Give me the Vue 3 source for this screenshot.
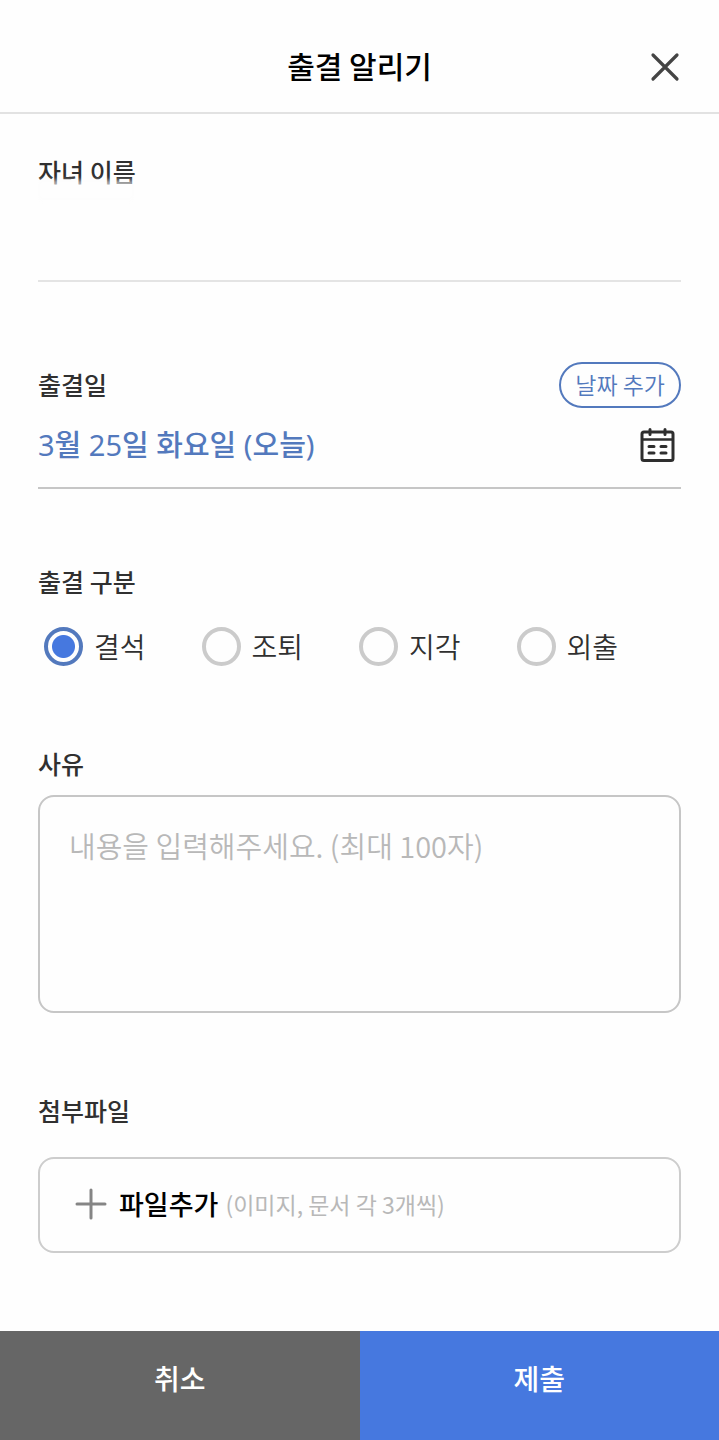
<script setup>
import { ref } from 'vue'

const childName = ref('')
const reason = ref('')
const kind = ref('absent')
const kinds = [
  { value: 'absent', label: '결석' },
  { value: 'early', label: '조퇴' },
  { value: 'late', label: '지각' },
  { value: 'outing', label: '외출' },
]
</script>

<template>
  <div class="page">
    <header class="header">
      <h1 class="title">출결 알리기</h1>
      <button class="close" type="button" aria-label="닫기">
        <svg width="30" height="30" viewBox="0 0 30 30" aria-hidden="true">
          <path d="M3 3 27 27M27 3 3 27" fill="none" stroke="#444" stroke-width="3.2" stroke-linecap="round" />
        </svg>
      </button>
    </header>

    <form id="attendance" class="form" @submit.prevent>
      <section class="name-section">
        <label class="label" for="child">자녀 이름</label>
        <input id="child" v-model="childName" class="name-input" type="text" />
      </section>

      <section class="date-section">
        <div class="date-head">
          <span class="label">출결일</span>
          <button class="add-date" type="button">날짜 추가</button>
        </div>
        <button class="date-row" type="button">
          <span>3월 25일 화요일 (오늘)</span>
          <svg width="36" height="36" viewBox="0 0 36 36" aria-hidden="true">
            <g fill="none" stroke="#2e2e2e" stroke-linecap="round" stroke-linejoin="round">
              <rect x="2" y="5" width="31" height="28.5" rx="2" stroke-width="3" />
              <path d="M3 12.5H32" stroke-width="2.6" />
              <path d="M10 2.5V7.5M25 2.5V7.5" stroke-width="3" />
              <path d="M9 19.5H14M21 19.5H26M9 26H14M21 26H26" stroke-width="3" />
            </g>
          </svg>
        </button>
      </section>

      <fieldset class="kind-section">
        <legend class="label">출결 구분</legend>
        <div class="kinds">
          <label v-for="k in kinds" :key="k.value" class="kind">
            <input v-model="kind" class="radio" type="radio" name="kind" :value="k.value" />
            <span>{{ k.label }}</span>
          </label>
        </div>
      </fieldset>

      <section class="reason-section">
        <label class="label" for="reason">사유</label>
        <textarea id="reason" v-model="reason" class="reason" maxlength="100" placeholder="내용을 입력해주세요. (최대 100자)"></textarea>
      </section>

      <section class="file-section">
        <span class="label">첨부파일</span>
        <button class="file" type="button">
          <svg width="32" height="32" viewBox="0 0 32 32" aria-hidden="true">
            <path d="M16 2V30M2 16H30" fill="none" stroke="#858585" stroke-width="3" stroke-linecap="round" />
          </svg>
          <span class="file-text">파일추가</span>
          <span class="file-hint">(이미지, 문서 각 3개씩)</span>
        </button>
      </section>
    </form>

    <footer class="footer">
      <button class="action cancel" type="button">취소</button>
      <button class="action submit" type="submit" form="attendance">제출</button>
    </footer>
  </div>
</template>

<style>
body {
  margin: 0;
  background: #fefefe;
}
</style>

<style scoped>
.page {
  display: flex;
  flex-direction: column;
  min-height: 100vh;
  color: #303030;
  font-family: "Noto Sans CJK KR", sans-serif;
}

.page * {
  box-sizing: border-box;
}

button,
input,
textarea {
  margin: 0;
  padding: 0;
  border: 0;
  background: none;
  color: inherit;
  font: inherit;
}

svg {
  display: block;
  flex: none;
}

.header {
  display: grid;
  grid-template-columns: 1fr auto 1fr;
  align-items: center;
  padding: 22px 39px 0;
  height: 114px;
  border-bottom: 2px solid #e2e2e2;
}

.title {
  grid-column: 2;
  margin: 0;
  padding-bottom: 4px;
  color: #000;
  font-size: 30px;
  font-weight: 500;
  line-height: 40px;
}

.close {
  justify-self: end;
}

.form {
  padding: 40px 38px;
}

.label {
  display: block;
  padding: 0 0 2px;
  font-size: 25px;
  font-weight: 500;
  line-height: 34px;
}

.name-section {
  position: relative;
}

/* soft veil over the hidden child name */
.name-section::after {
  content: "";
  position: absolute;
  top: 26px;
  left: 0;
  width: 96px;
  height: 20px;
  background: rgba(254, 254, 254, 0.6);
  filter: blur(2px);
}

.name-input {
  display: block;
  width: 100%;
  height: 92px;
  border-bottom: 2px solid #e4e4e4;
  font-size: 28px;
}

.date-section {
  margin-top: 80px;
}

.date-head {
  display: flex;
  align-items: center;
  justify-content: space-between;
}

.add-date {
  height: 46px;
  padding: 0 14px 2px;
  border: 2px solid #5379bd;
  border-radius: 23px;
  color: #5379bd;
  font-size: 23px;
  font-weight: 350;
  line-height: 36px;
}

.date-row {
  display: flex;
  align-items: center;
  justify-content: space-between;
  width: 100%;
  height: 81px;
  padding: 0 5px 5px 0;
  border-bottom: 2px solid #c6c6c6;
  color: #5379bd;
  font-family: "Noto Sans", "Noto Sans CJK KR", sans-serif;
  font-size: 29px;
  font-weight: 450;
  line-height: 40px;
}

.kind-section {
  min-width: 0;
  margin: 75px 0 0;
  padding: 0;
  border: 0;
}

.kinds {
  display: flex;
  gap: 56px;
  padding: 26px 0 0 6px;
}

.kind {
  display: flex;
  align-items: center;
  gap: 11px;
  height: 40px;
  font-size: 28px;
  font-weight: 350;
  line-height: 40px;
}

.radio {
  flex: none;
  width: 39px;
  height: 39px;
  border: 4px solid #cbcbcb;
  border-radius: 50%;
  appearance: none;
}

.radio:checked {
  border-color: #5379bd;
  background: radial-gradient(circle, #4678df 11px, #fefefe 12px);
}

.reason-section {
  margin-top: 80px;
}

.reason {
  display: block;
  width: 100%;
  height: 218px;
  margin-top: 13px;
  padding: 28px 29px;
  border: 2px solid #c6c6c6;
  border-radius: 16px;
  font-size: 29px;
  font-weight: 350;
  line-height: 40px;
  resize: none;
}

.reason::placeholder {
  color: #b8b8b8;
  opacity: 1;
}

.file-section {
  margin-top: 80px;
}

.file {
  display: flex;
  align-items: center;
  width: 100%;
  height: 96px;
  margin-top: 28px;
  padding: 0 35px 2px;
  border: 2px solid #cdcdcd;
  border-radius: 16px;
  line-height: 40px;
}

.file-text {
  margin: 0 7px 0 12px;
  color: #000;
  font-size: 27px;
  font-weight: 500;
}

.file-hint {
  color: #b8b8b8;
  font-size: 23px;
}

.footer {
  display: flex;
  margin-top: auto;
}

.action {
  flex: 1;
  height: 109px;
  padding-bottom: 15px;
  color: #fff;
  font-size: 28px;
  font-weight: 500;
  line-height: 40px;
}

.cancel {
  background: #666;
}

.submit {
  background: #4678df;
}
</style>
